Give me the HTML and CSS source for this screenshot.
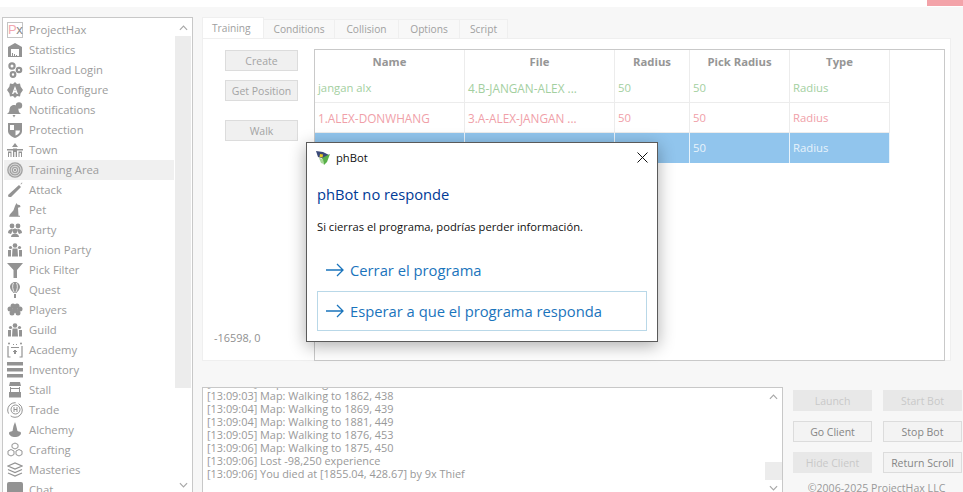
FILE: index.html
```html
<!DOCTYPE html>
<html lang="es">
<head>
<meta charset="utf-8">
<title>phBot</title>
<link rel="stylesheet" href="styles.css">
</head>
<body>
<svg class="defs" width="0" height="0" aria-hidden="true">
<defs>
<symbol id="i-stat" viewBox="0 0 16 16"><path d="M1 5 8 1l7 4v10H1z"/><path fill="#fff" d="M4 7h8v7H4z"/><path d="M5 11h1v3H5zM7 12h1v2H7zM9 13h1v1H9z"/></symbol>
<symbol id="i-gears" viewBox="0 0 16 16"><g fill="none" stroke-width="2.2"><circle cx="5" cy="4" r="2.6"/><circle cx="12" cy="8" r="2.2"/><circle cx="6" cy="12.5" r="2.3"/></g></symbol>
<symbol id="i-auto" viewBox="0 0 16 16"><path d="M8 0l2 2 3-.5.6 3L16 8l-2.400 3.500-.6 3-3-.5-2 2-2-2-3 .5-.6-3L0 8l2.400-3.500.6-3 3 .5z"/><path fill="#fff" d="M8 4l3 8H9.600L9 10.500H7L6.400 12H5zM7.500 9h1L8 7.200z"/></symbol>
<symbol id="i-bell" viewBox="0 0 16 16"><circle cx="12" cy="3.500" r="3.200"/><path d="M7 3c3 0 4.500 2.500 4.500 5 0 2 1.500 3 2.500 4H0c1-1 2.500-2 2.500-4C2.500 5.500 4 3 7 3zM5.500 13h3L7 15.500z"/></symbol>
<symbol id="i-shield" viewBox="0 0 16 16"><path d="M1 1h14v8c0 3-3 5.500-7 7-4-1.500-7-4-7-7z"/><path fill="#fff" d="M3 3h4v5H3zM8.500 8.500H13c0 2.500-2 4-4.500 5z"/></symbol>
<symbol id="i-town" viewBox="0 0 16 16"><path d="M8 1l3 4H5zM0 7h16v1.500H0zM1 9.500h3.500V15H1zM6 6.500h4V15H6zM11.500 9.500H15V15h-3.500z"/><path fill="#fff" d="M2 11h1.500v4H2zM12.500 11H14v4h-1.500zM7.300 10h1.400v5H7.300z"/></symbol>
<symbol id="i-target" viewBox="0 0 16 16"><circle cx="8" cy="8" r="7.800" opacity=".85"/><g fill="none" stroke="#e4e4e4" stroke-width=".9"><circle cx="8" cy="8" r="6"/><circle cx="8" cy="8" r="3.800"/><circle cx="8" cy="8" r="1.700"/></g></symbol>
<symbol id="i-attack" viewBox="0 0 16 16"><path d="M12 3l2 2L4 15H1.500L1 13zM13.500 2 15 .5l.4.4L14 2.500z"/></symbol>
<symbol id="i-pet" viewBox="0 0 16 16"><path d="M9.500 1l.8 1.500 2.700.8.500 1.700-2.500.8.500 8h1.500v1H2c.5-3 3-4.500 4.500-6.500L8 4z"/></symbol>
<symbol id="i-party" viewBox="0 0 16 16"><circle cx="5" cy="4" r="2.400"/><circle cx="11" cy="4" r="2.400"/><circle cx="8" cy="9" r="2.400"/><path d="M1 11c0-3 2-4 4-4 1 0 1 1 1 1L4 12zM15 11c0-3-2-4-4-4-1 0-1 1-1 1l2 4zM4 15c0-2 2-3.500 4-3.500s4 1.500 4 3.500z"/></symbol>
<symbol id="i-union" viewBox="0 0 16 16"><circle cx="8" cy="3.500" r="2.300"/><circle cx="3.500" cy="5.500" r="1.600"/><circle cx="12.500" cy="5.500" r="1.600"/><path d="M5.500 6.500h5l.5 8H5zM1 8h3v6.500H1zM12 8h3v6.500h-3z"/></symbol>
<symbol id="i-filter" viewBox="0 0 16 16"><path d="M0 1h16L10 8v8H6.500V8z"/></symbol>
<symbol id="i-quest" viewBox="0 0 16 16"><path d="M8 0c3 0 5 2.500 5 5s-2.500 4.500-3.500 6h-3C5.500 9.500 3 7.500 3 5s2-5 5-5zM7 12h2v4H7z"/><path fill="none" stroke="#fff" stroke-width=".8" d="M6.500 1C5 3.500 5.500 7.500 7.300 10.500M9.500 1c1.500 2.500 1 6.500-.8 9.500"/></symbol>
<symbol id="i-players" viewBox="0 0 16 16"><circle cx="3" cy="7" r="2.500"/><circle cx="13" cy="7" r="2.500"/><circle cx="6" cy="4" r="2.500"/><circle cx="10" cy="4" r="2.500"/><circle cx="8" cy="8" r="3"/><circle cx="5" cy="11" r="2.500"/><circle cx="11" cy="11" r="2.500"/></symbol>
<symbol id="i-academy" viewBox="0 0 16 16"><g fill="none" stroke-width="1.200"><path d="M1 4v11h2.500M15 4v11h-2.500"/></g><circle cx="2" cy="1.500" r="1"/><circle cx="14" cy="1.500" r="1"/><path d="M6 2h1v1H6zM9 2h1v1H9zM4 5h8v1H4zM7 8h2v1h1v1H9v2H7v-2H6V9h1z"/></symbol>
<symbol id="i-inv" viewBox="0 0 16 16"><path d="M0 0h16v3.500H0zM0 6h16v3.500H0zM0 12h16v3.500H0z"/></symbol>
<symbol id="i-stall" viewBox="0 0 16 16"><path d="M3 0h10l1 4H2zM3 5h1v5H3zM12 5h1v5h-1zM2 10h12v5.500H2z"/><path d="M3 6h10v1H3z"/></symbol>
<symbol id="i-trade" viewBox="0 0 16 16"><g fill="none" stroke-width="1"><circle cx="8" cy="8" r="7.300" stroke-dasharray="16 3"/><circle cx="8.500" cy="7.500" r="4.500"/></g><path d="M6.500 5h1v5h-1zM9.500 5h1v5h-1zM6.500 7h4v1h-4z"/></symbol>
<symbol id="i-alch" viewBox="0 0 16 16"><path d="M8 0l1 3 1.500 6c2 .5 3.500 1 3.500 2 0 2.500-3 4-6 4s-6-1.500-6-4c0-1 1.500-1.500 3.500-2L6.500 4z"/></symbol>
<symbol id="i-craft" viewBox="0 0 16 16"><g fill="none" stroke-width="1"><path d="M8 1l3 1.500v3L8 7 5 5.500v-3zM4 7.500l3 1.500v3.500L4 14l-3-1.500V9zM12 7.500 15 9v3.500L12 14l-3-1.500V9z"/></g></symbol>
<symbol id="i-mast" viewBox="0 0 16 16"><g fill="none" stroke-width="1.200"><path d="M1 4l7-3 7 3-7 3zM1 7.500l7 3 7-3M1 11l7 3 7-3"/></g></symbol>
<symbol id="i-chat" viewBox="0 0 16 16"><path d="M2 0h12a2 2 0 0 1 2 2v8a2 2 0 0 1-2 2H6l-3 3v-3H2a2 2 0 0 1-2-2V2a2 2 0 0 1 2-2z"/></symbol>
</defs>
</svg>
<div class="topstrip"><span class="closehover"></span></div>
<div class="app">
  <nav class="side">
    <ul class="menu">
      <li class="item"><span class="pxlogo"><span class="p">P</span>x</span>ProjectHax</li>
      <li class="item"><svg class="ico"><use href="#i-stat"/></svg>Statistics</li>
      <li class="item"><svg class="ico"><use href="#i-gears"/></svg>Silkroad Login</li>
      <li class="item"><svg class="ico"><use href="#i-auto"/></svg>Auto Configure</li>
      <li class="item"><svg class="ico"><use href="#i-bell"/></svg>Notifications</li>
      <li class="item"><svg class="ico"><use href="#i-shield"/></svg>Protection</li>
      <li class="item"><svg class="ico"><use href="#i-town"/></svg>Town</li>
      <li class="item active"><svg class="ico"><use href="#i-target"/></svg>Training Area</li>
      <li class="item"><svg class="ico"><use href="#i-attack"/></svg>Attack</li>
      <li class="item"><svg class="ico"><use href="#i-pet"/></svg>Pet</li>
      <li class="item"><svg class="ico"><use href="#i-party"/></svg>Party</li>
      <li class="item"><svg class="ico"><use href="#i-union"/></svg>Union Party</li>
      <li class="item"><svg class="ico"><use href="#i-filter"/></svg>Pick Filter</li>
      <li class="item"><svg class="ico"><use href="#i-quest"/></svg>Quest</li>
      <li class="item"><svg class="ico"><use href="#i-players"/></svg>Players</li>
      <li class="item"><svg class="ico"><use href="#i-union"/></svg>Guild</li>
      <li class="item"><svg class="ico"><use href="#i-academy"/></svg>Academy</li>
      <li class="item"><svg class="ico"><use href="#i-inv"/></svg>Inventory</li>
      <li class="item"><svg class="ico"><use href="#i-stall"/></svg>Stall</li>
      <li class="item"><svg class="ico"><use href="#i-trade"/></svg>Trade</li>
      <li class="item"><svg class="ico"><use href="#i-alch"/></svg>Alchemy</li>
      <li class="item"><svg class="ico"><use href="#i-craft"/></svg>Crafting</li>
      <li class="item"><svg class="ico"><use href="#i-mast"/></svg>Masteries</li>
      <li class="item"><svg class="ico"><use href="#i-chat"/></svg>Chat</li>
    </ul>
    <div class="scroll side-scroll">
      <svg class="arrow" viewBox="0 0 10 6"><path d="M1 5l4-4 4 4"/></svg>
      <div class="track"><div class="thumb side-thumb"></div></div>
      <svg class="arrow" viewBox="0 0 10 6"><path d="M1 1l4 4 4-4"/></svg>
    </div>
  </nav>
  <main class="content">
    <div class="tabs">
      <span class="tab current">Training</span>
      <span class="tab">Conditions</span>
      <span class="tab">Collision</span>
      <span class="tab">Options</span>
      <span class="tab">Script</span>
    </div>
    <section class="panel">
      <div class="tools">
        <button class="btn">Create</button>
        <button class="btn">Get Position</button>
        <button class="btn walk">Walk</button>
        <span class="coords">-16598, 0</span>
      </div>
      <div class="tablewrap">
        <table class="grid">
          <colgroup><col class="c1"><col class="c2"><col class="c3"><col class="c4"><col class="c5"></colgroup>
          <thead><tr><th>Name</th><th>File</th><th>Radius</th><th>Pick Radius</th><th>Type</th></tr></thead>
          <tbody>
            <tr class="green"><td>jangan alx</td><td class="caps">4.B-JANGAN-ALEX ...</td><td>50</td><td>50</td><td>Radius</td></tr>
            <tr class="red"><td class="caps">1.ALEX-DONWHANG</td><td class="caps">3.A-ALEX-JANGAN ...</td><td>50</td><td>50</td><td>Radius</td></tr>
            <tr class="sel"><td></td><td></td><td></td><td>50</td><td>Radius</td></tr>
          </tbody>
        </table>
      </div>
    </section>
    <div class="bottom">
      <div class="log">
        <div class="lines">
          <p>[13:09:02] Map: Walking to 1855, 432</p>
          <p>[13:09:03] Map: Walking to 1862, 438</p>
          <p>[13:09:04] Map: Walking to 1869, 439</p>
          <p>[13:09:04] Map: Walking to 1881, 449</p>
          <p>[13:09:05] Map: Walking to 1876, 453</p>
          <p>[13:09:06] Map: Walking to 1875, 450</p>
          <p>[13:09:06] Lost -98,250 experience</p>
          <p>[13:09:06] You died at [1855.04, 428.67] by 9x Thief</p>
        </div>
        <div class="scroll log-scroll">
          <svg class="arrow" viewBox="0 0 10 6"><path d="M1 5l4-4 4 4"/></svg>
          <div class="track"><div class="thumb log-thumb"></div></div>
          <svg class="arrow" viewBox="0 0 10 6"><path d="M1 1l4 4 4-4"/></svg>
        </div>
      </div>
      <div class="controls">
        <div class="btngrid">
          <button class="btn off">Launch</button>
          <button class="btn off">Start Bot</button>
          <button class="btn on">Go Client</button>
          <button class="btn on">Stop Bot</button>
          <button class="btn off">Hide Client</button>
          <button class="btn on">Return Scroll</button>
        </div>
        <div class="copy">©2006-2025 ProjectHax LLC</div>
      </div>
    </div>
  </main>
</div>

<div class="dialog">
  <div class="dlg-title">
    <svg class="dlg-icon" viewBox="0 0 16 16"><path fill="#3a4a78" d="M1 1l7 1 6 3-4 4-7-2z"/><path fill="#e8c820" d="M5 4l3 .5-.5 3-3-.5z"/><path fill="#58b048" d="M7 8l8-4-3 8-3 3z"/><path fill="#a8d898" d="M4 8l4 1 1 5-3-1z"/></svg>
    <span>phBot</span>
    <svg class="dlg-x" viewBox="0 0 11 11"><path d="M.5.5l10 10M10.500.5l-10 10"/></svg>
  </div>
  <h1 class="dlg-head">phBot no responde</h1>
  <p class="dlg-text">Si cierras el programa, podrías perder información.</p>
  <div class="dlg-actions">
    <div class="action"><svg class="go" viewBox="0 0 18 14"><path d="M0 7h17M11 1l6 6-6 6"/></svg>Cerrar el programa</div>
    <div class="action focus"><svg class="go" viewBox="0 0 18 14"><path d="M0 7h17M11 1l6 6-6 6"/></svg>Esperar a que el programa responda</div>
  </div>
</div>
</body>
</html>
```
FILE: styles.css
```css
* { box-sizing: border-box; }
html, body { margin: 0; padding: 0; height: 492px; overflow: hidden; }
body { background: #f7f7f7; font-family: "Open Sans", "Noto Sans", sans-serif; font-size: 11.300px; color: #999; }
.defs { display: block; height: 0; }
.topstrip { height: 7px; background: #fff; display: flex; justify-content: flex-end; }
.closehover { width: 36px; height: 6px; background: #f3a3a9; }
.app { display: flex; height: 485px; padding: 10px 0 0 2px; gap: 9px; overflow: hidden; }

/* sidebar */
.side { width: 191px; height: 475px; flex: none; background: #fff; border: 1px solid #c8c8c8; border-bottom: 0; display: flex; padding: 2px 1px 0 1px; overflow: hidden; }
.menu { list-style: none; margin: 0; padding: 0; width: 170px; flex: none; }
.item { height: 20px; display: flex; align-items: center; gap: 6px; padding-left: 3px; line-height: 20px; color: #9c9c9c; white-space: nowrap; }
.item.active { background: #f0f0f0; }
.ico { width: 16px; height: 16px; flex: none; fill: #939393; stroke: #939393; stroke-width: 0; }
.pxlogo { width: 16px; height: 16px; flex: none; border: 1px solid #c4c4c4; font: 13px/13px "Liberation Sans", sans-serif; color: #888; text-align: center; letter-spacing: -.5px; }
.pxlogo .p { color: #f2a8b0; }

.scroll { display: flex; flex-direction: column; align-items: center; background: #fff; }
.side-scroll { width: 16px; margin-left: 1px; height: 473px; flex: none; }
.arrow { width: 9px; height: 6px; flex: none; margin: 5px 0; fill: none; stroke: #a8a8a8; stroke-width: 1.300; }
.track { flex: 1; width: 100%; }
.thumb { background: #ececec; width: 100%; }
.side-thumb { height: 352px; }
.log-thumb { height: 18px; margin-top: 58px; }

/* content */
.content { width: 760px; flex: none; display: flex; flex-direction: column; }
.tabs { display: grid; grid-template-columns: 62px 71px 64px 61px 48px; height: 21px; align-items: end; justify-content: start; font-size: 10.200px; }
.tab { height: 19px; text-align: center; line-height: 18px; color: #a0a0a0; background: #f8f8f8; border-right: 1px solid #efefef; border-top: 1px solid #efefef; }
.tab.current { height: 21px; line-height: 20px; padding-left: 9px; text-align: left; background: #fff; border: 1px solid #efefef; border-bottom: 0; }
.panel { width: 749px; height: 323px; background: #fff; border: 1px solid #efefef; display: flex; padding: 10px 5px 0 22px; }
.tools { width: 89px; flex: none; display: flex; flex-direction: column; align-items: flex-start; padding-top: 1px; }
.btn { font: 10.500px "Open Sans", "Noto Sans", sans-serif; padding: 2px 0 0; color: #a4a4a4; background: #f0f0f0; border: 1px solid #dcdcdc; width: 73px; height: 21px; line-height: 17px; margin-bottom: 9px; }
.walk { margin-top: 10px; }
.coords { margin-top: auto; margin-left: -11px; margin-bottom: 15px; font-size: 10.900px; color: #909090; }
.tablewrap { flex: 1; height: 312px; border: 1px solid #c9c9c9; background: #fff; }
.grid { border-collapse: separate; border-spacing: 0; table-layout: fixed; width: 575px; }
.c1, .c2 { width: 150px; }
.c3 { width: 75px; }
.c4, .c5 { width: 100px; }
.grid th { height: 23px; font-weight: 700; color: #969696; border-right: 1px solid #ececec; padding: 0; }
.grid td { height: 30px; padding: 0 0 0 3px; border-right: 1px solid #ececec; border-bottom: 1px solid #ececec; white-space: nowrap; }
.grid td.caps { font-size: 11.800px; }
.green td { color: #a3cf9f; }
.red td { color: #f0a0a8; }
.grid .sel td { background: #91c5ed; color: #e8f3fb; border-right-color: #e8f3fb; border-bottom: 0; height: 30px; padding-bottom: 2px; }

/* bottom */
.bottom { display: flex; margin-top: 26px; gap: 10px; height: 105px; }
.log { width: 581px; height: 105px; flex: none; background: #fff; border: 1px solid #c8c8c8; border-bottom: 0; display: flex; overflow: hidden; }
.lines { flex: 1; padding: 0 0 0 4px; margin-top: -12px; overflow: hidden; }
.lines p { margin: 0; height: 13px; font-size: 10.900px; line-height: 13px; color: #999; white-space: nowrap; }
.log-scroll { width: 17px; height: 104px; flex: none; }
.log-scroll .arrow:first-child { margin-top: 6px; margin-bottom: 4px; }
.controls { width: 170px; flex: none; padding-top: 3px; }
.btngrid { display: grid; grid-template-columns: 79px 79px; column-gap: 11px; row-gap: 10px; }
.btn.on, .btn.off { width: 79px; margin: 0; }
.btn.on { color: #858585; background: #f3f3f3; }
.btn.off { color: #c8c8c8; background: #e8e8e8; border-color: #e8e8e8; }
.copy { margin-top: 8px; width: 167px; text-align: center; font-size: 10.600px; line-height: 14px; color: #999; white-space: nowrap; }

/* dialog over the app */
.dialog { position: absolute; left: 306px; top: 142px; width: 352px; height: 200px; background: #fff; border: 1px solid #5a5a5a; box-shadow: 0 4px 16px rgba(0,0,0,.32); padding: 0 10px; color: #000; }
.dlg-title { display: flex; align-items: center; height: 29px; gap: 5px; font-size: 11.200px; color: #111; }
.dlg-icon { width: 16px; height: 16px; flex: none; margin-left: -2px; }
.dlg-x { width: 11px; height: 11px; margin-left: auto; margin-right: -1px; fill: none; stroke: #111; stroke-width: 1; }
.dlg-head { margin: 10px 0 0; font-size: 14.700px; line-height: 24px; font-weight: 400; color: #003a96; }
.dlg-text { margin: 13px 0 0; font-size: 11.200px; line-height: 16px; color: #111; }
.dlg-actions { margin-top: 15px; display: flex; flex-direction: column; gap: 1px; }
.action { width: 330px; height: 40px; display: flex; align-items: center; gap: 6px; padding-left: 8px; font-size: 14.750px; color: #1a74bc; border: 1px solid transparent; }
.action.focus { border-color: #b9d8e8; }
.go { width: 18px; height: 14px; flex: none; fill: none; stroke: #1a74bc; stroke-width: 1.300; }
```
